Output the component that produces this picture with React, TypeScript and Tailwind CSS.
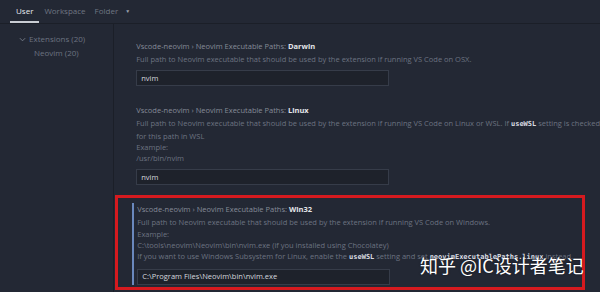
import React from "react";

const Code = ({ children }: { children: React.ReactNode }) => (
  <code className="font-['DejaVu_Sans_Mono',monospace] text-[7px] font-bold text-[#d9dce2]">{children}</code>
);

function Setting({
  name,
  lines,
  value,
  active,
}: {
  name: string;
  lines: React.ReactNode[];
  value: string;
  active?: boolean;
}) {
  return (
    <div className={"pl-[3px] border-l-2 " + (active ? "border-[#6a88bd]" : "border-transparent")}>
      <div className="text-[7.5px] leading-[12px] text-[#858b98] whitespace-nowrap">
        Vscode-neovim › Neovim Executable Paths: <span className="font-bold text-[#e3e6ea]">{name}</span>
      </div>
      <div className="mt-[2px] text-[7.5px] leading-[11.3px] text-[#6c7381]">
        {lines.map((l, i) => (
          <div key={i} className="whitespace-nowrap">
            {l}
          </div>
        ))}
      </div>
      <div className="mt-[5px] w-[253px] h-[16px] bg-[#1e222b] border border-[#363c49] flex items-center pl-[4px] text-[7.5px] text-[#d5d8de]">
        {value}
      </div>
    </div>
  );
}

export default function App() {
  return (
    <div className="w-[600px] h-[292px] overflow-hidden bg-[#232834] font-['Open_Sans',sans-serif] relative">
      {/* tab bar */}
      <div className="h-[24px] border-b border-[#1b1f28] flex items-end pl-[10px] text-[8px]">
        <div className="border-b-2 border-[#c9cdd4] px-[6px] pb-[4px] text-[#e8eaee]">User</div>
        <div className="ml-[5px] pb-[6px] text-[#6f7683]">Workspace</div>
        <div className="ml-[9px] pb-[6px] text-[#6f7683] flex items-center gap-[7px]">
          Folder
          <span className="text-[5px] leading-none text-[#9aa0ab]">▼</span>
        </div>
      </div>

      <div className="flex">
        {/* tree */}
        <div className="w-[116px] h-[268px] border-r border-[#1b1f28] pt-[8px] text-[8px] text-[#6c7381]">
          <div className="flex items-center pl-[19px] gap-[3px] leading-[14px]">
            <svg width="7" height="7" viewBox="0 0 8 8" fill="none" stroke="#7c8290" strokeWidth="1">
              <path d="M1 2.5 L4 5.5 L7 2.5" />
            </svg>
            <span>Extensions (20)</span>
          </div>
          <div className="pl-[34px] leading-[14px]">Neovim (20)</div>
        </div>

        {/* settings */}
        <div className="flex-1 pl-[1px] pt-[16px]">
          <div className="pl-[16px]">
            <Setting
              name="Darwin"
              value="nvim"
              lines={["Full path to Neovim executable that should be used by the extension if running VS Code on OSX."]}
            />
          </div>
          <div className="pl-[16px] mt-[18px]">
            <Setting
              name="Linux"
              value="nvim"
              lines={[
                <>
                  Full path to Neovim executable that should be used by the extension if running VS Code on Linux or WSL. If{" "}
                  <Code>useWSL</Code> setting is checked
                </>,
                "for this path in WSL",
                "Example:",
                "/usr/bin/nvim",
              ]}
            />
          </div>
          <div className="mt-[10px] border-[3px] border-[#d51a1f] pt-[5px] pb-[2px] pl-[14px] w-[470px]">
            <Setting
              name="Win32"
              value="C:\Program Files\Neovim\bin\nvim.exe"
              active
              lines={[
                "Full path to Neovim executable that should be used by the extension if running VS Code on Windows.",
                "Example:",
                "C:\\tools\\neovim\\Neovim\\bin\\nvim.exe (if you installed using Chocolatey)",
                <>
                  If you want to use Windows Subsystem for Linux, enable the <Code>useWSL</Code> setting and set{" "}
                  <Code>neovimExecutablePaths.linux</Code> instead.
                </>,
              ]}
            />
          </div>
        </div>
      </div>

      {/* watermark */}
      <div className="absolute left-[420px] top-[253px] text-[18px] leading-[24px] text-white font-['Noto_Sans_CJK_SC',sans-serif] [text-shadow:0_0_2px_rgba(0,0,0,0.5)] whitespace-nowrap">
        知乎 @IC设计者笔记
      </div>
    </div>
  );
}
